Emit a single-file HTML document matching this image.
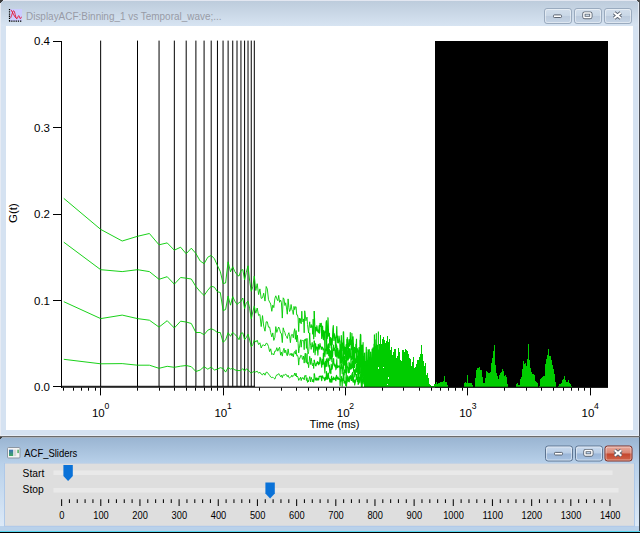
<!DOCTYPE html>
<html lang="en"><head><meta charset="utf-8"><title>DisplayACF</title>
<style>
html,body{margin:0;padding:0;background:#fff;overflow:hidden}
body{width:640px;height:533px;position:relative;font-family:"Liberation Sans",Arial,sans-serif}
svg text{white-space:pre}
</style></head><body>
<svg width="640" height="533" viewBox="0 0 640 533" style="position:absolute;left:0;top:0" font-family="'Liberation Sans', Arial, sans-serif">
<defs>
<linearGradient id="gi" x1="0" y1="0" x2="0" y2="1"><stop offset="0" stop-color="#bccbdb"/><stop offset="1" stop-color="#d7e4f2"/></linearGradient>
<linearGradient id="ga" x1="0" y1="0" x2="0" y2="1"><stop offset="0" stop-color="#99b4d1"/><stop offset="1" stop-color="#b9d1ea"/></linearGradient>
<linearGradient id="gb" x1="0" y1="0" x2="0" y2="1"><stop offset="0" stop-color="#d3dfec"/><stop offset="0.48" stop-color="#c9d7e6"/><stop offset="0.52" stop-color="#bccbdd"/><stop offset="1" stop-color="#c6d5e6"/></linearGradient>
<linearGradient id="gb2" x1="0" y1="0" x2="0" y2="1"><stop offset="0" stop-color="#cbdbee"/><stop offset="0.48" stop-color="#b8cde6"/><stop offset="0.52" stop-color="#9ab5d7"/><stop offset="1" stop-color="#a9c4e3"/></linearGradient>
<linearGradient id="gr" x1="0" y1="0" x2="0" y2="1"><stop offset="0" stop-color="#e8ab9f"/><stop offset="0.48" stop-color="#d98572"/><stop offset="0.52" stop-color="#c4452d"/><stop offset="1" stop-color="#d2674d"/></linearGradient>
<linearGradient id="gs" x1="0" y1="0" x2="0" y2="1"><stop offset="0" stop-color="#b9d1ea"/><stop offset="1" stop-color="#dce9f7"/></linearGradient>
<linearGradient id="gicon" x1="0" y1="0" x2="0" y2="1"><stop offset="0" stop-color="#3a6fb5"/><stop offset="1" stop-color="#3fa860"/></linearGradient>
<clipPath id="cp"><rect x="61" y="41" width="548" height="346"/></clipPath>
</defs>
<rect x="0" y="0" width="640" height="437" fill="#d5e2f1"/>
<rect x="0" y="0" width="640" height="26" fill="url(#gi)"/>
<rect x="0" y="0" width="640" height="1" fill="#e3e7f1"/>
<rect x="0" y="0" width="1" height="437" fill="#e6ebf4"/>
<rect x="638" y="1" width="1" height="435" fill="#e6ecf5"/>
<rect x="639" y="0" width="1" height="437" fill="#4c5058"/>
<path d="M640,0h-3v1h1v1h1v1h1z" fill="#4a4a4a"/>
<rect x="1" y="435" width="638" height="1" fill="#e8eef6"/>
<path d="M0,0h3v1h-1v1h-1v1h-1z" fill="#3c3c3c"/>
<rect x="6" y="26" width="627" height="404" fill="#ffffff"/>
<rect x="0" y="436" width="640" height="1" fill="#6c6c6c"/>
<rect x="10" y="9" width="12" height="12" fill="#ccccff"/>
<path d="M9.5,9v12.5M9,21.2h12.5" stroke="#000" stroke-width="1.2" stroke-dasharray="1.3,0.9" fill="none"/>
<path d="M11,9.8 C12.8,12.5 14.5,17.5 16.8,18.6 M10.4,18 C11.6,17 12.6,10.7 13.6,10.7 C14.9,10.7 15.5,18.7 16.9,18.7 C17.8,18.7 18,15.6 18.7,15.6 C19.4,15.6 19.6,18.7 20.3,18.7 C20.9,18.7 21,16.8 21.7,16.8" stroke="#e6001e" stroke-width="0.8" fill="none"/>
<text x="26" y="20.3" font-size="11.3" fill="#989ba6" textLength="195.5" lengthAdjust="spacingAndGlyphs">DisplayACF:Binning_1 vs Temporal_wave;...</text>
<rect x="544.5" y="8.5" width="27" height="15" rx="2.5" fill="url(#gb)" stroke="#9aabbf" stroke-width="1"/>
<rect x="545.5" y="9.5" width="25" height="13" rx="1.8" fill="none" stroke="#ffffff" stroke-opacity="0.45" stroke-width="1"/>
<rect x="574.5" y="8.5" width="27" height="15" rx="2.5" fill="url(#gb)" stroke="#9aabbf" stroke-width="1"/>
<rect x="575.5" y="9.5" width="25" height="13" rx="1.8" fill="none" stroke="#ffffff" stroke-opacity="0.45" stroke-width="1"/>
<rect x="604.5" y="8.5" width="27" height="15" rx="2.5" fill="url(#gb)" stroke="#9aabbf" stroke-width="1"/>
<rect x="605.5" y="9.5" width="25" height="13" rx="1.8" fill="none" stroke="#ffffff" stroke-opacity="0.45" stroke-width="1"/>
<rect x="553.5" y="14.9" width="8" height="2.6" rx="0.8" fill="#fff" stroke="#5b6471" stroke-width="1"/>
<rect x="583.9" y="13.0" width="7" height="4.6" rx="0.8" fill="none" stroke="#5b6471" stroke-width="3.2"/>
<rect x="583.9" y="13.0" width="7" height="4.6" rx="0.8" fill="none" stroke="#fff" stroke-width="1.5"/>
<path d="M614.2,12.8l6.6,5.4m0,-5.4l-6.6,5.4" stroke="#5b6471" stroke-width="3.8" fill="none"/>
<path d="M614.2,12.8l6.6,5.4m0,-5.4l-6.6,5.4" stroke="#fff" stroke-width="2.0" fill="none"/>
<rect x="435" y="41" width="173" height="346.6" fill="#000"/>
<path d="M100.65,40.6V386.5M137.50,40.6V386.5M159.05,40.6V386.5M174.34,40.6V386.5M186.20,40.6V386.5M195.90,40.6V386.5M204.09,40.6V386.5M211.19,40.6V386.5M217.45,40.6V386.5M223.05,40.6V386.5M228.12,40.6V386.5M232.74,40.6V386.5M237.00,40.6V386.5M240.94,40.6V386.5M244.60,40.6V386.5M248.03,40.6V386.5M251.26,40.6V386.5M254.30,40.6V386.5" stroke="#000" stroke-width="1" fill="none"/>
<g clip-path="url(#cp)" fill="none" stroke="#00cc00" stroke-width="0.9" stroke-linejoin="round">
<path d="M63.8,198.4 L100.7,229.4 L122.2,241.0 L137.5,236.3 L149.4,233.5 L159.0,244.8 L167.2,242.9 L174.3,250.2 L180.6,247.2 L186.2,253.8 L191.3,248.2 L195.9,253.5 L200.2,261.0 L204.1,263.7 L207.8,257.2 L211.2,255.4 L214.4,258.7 L217.4,265.5 L220.3,271.5 L223.1,283.5 L225.6,283.0 L228.1,261.8 L230.5,271.9 L232.7,266.7 L234.9,271.7 L237.0,274.7 L239.0,276.1 L240.9,270.4 L242.8,269.6 L244.6,280.0 L246.3,272.4 L248.0,265.8 L249.7,281.2 L251.3,291.3 L252.8,286.9 L254.3,276.0 L255.8,290.5 L257.2,283.7 L258.6,294.6 L259.9,288.9 L261.2,298.4 L262.5,297.8 L263.7,293.2 L265.0,301.1 L266.2,286.5 L267.3,288.9 L268.5,299.7 L269.6,302.0 L270.7,304.0 L271.8,311.3 L272.8,305.1 L273.8,307.6 L274.9,298.3 L275.8,295.8 L276.8,298.9 L277.8,300.7 L278.7,295.4 L279.6,302.3 L280.6,300.1 L281.4,302.3 L282.3,318.1 L283.2,297.8 L284.0,299.0 L284.9,305.5 L285.7,302.8 L286.5,307.9 L287.3,314.2 L288.1,298.9 L288.9,307.6 L289.6,311.5 L290.4,309.8 L291.1,304.5 L291.9,309.6 L292.6,311.2 L293.3,314.5 L294.0,306.4 L294.7,309.7 L295.4,306.8 L296.1,306.8 L296.7,314.9 L297.4,314.9 L298.1,318.0 L298.7,331.6 L299.3,318.0 L300.0,322.9 L300.6,318.6 L301.2,323.8 L301.8,311.2 L302.4,320.7 L303.0,321.9 L303.6,318.9 L304.2,332.8 L304.7,310.8 L305.3,314.9 L305.9,320.8 L306.4,319.4 L307.0,317.1 L307.5,324.6 L308.1,329.2 L308.6,333.1 L309.1,327.0 L309.7,321.8 L310.2,327.4 L310.7,327.6 L311.2,324.5 L311.7,327.6 L312.2,325.6 L312.7,334.3 L313.2,319.1 L313.7,339.2 L314.2,311.1"/>
<path d="M63.8,242.2 L100.7,269.7 L122.2,271.6 L137.5,269.7 L149.4,271.6 L159.0,279.3 L167.2,276.7 L174.3,284.2 L180.6,277.5 L186.2,278.2 L191.3,279.0 L195.9,286.5 L200.2,291.7 L204.1,295.5 L207.8,290.2 L211.2,286.2 L214.4,287.2 L217.4,291.7 L220.3,292.5 L223.1,310.5 L225.6,309.6 L228.1,296.1 L230.5,305.2 L232.7,296.6 L234.9,301.2 L237.0,304.5 L239.0,302.7 L240.9,301.5 L242.8,298.0 L244.6,308.7 L246.3,302.8 L248.0,301.2 L249.7,308.8 L251.3,318.9 L252.8,311.8 L254.3,305.9 L255.8,313.2 L257.2,308.0 L258.6,315.5 L259.9,314.5 L261.2,326.6 L262.5,315.6 L263.7,326.2 L265.0,331.2 L266.2,321.8 L267.3,321.8 L268.5,327.2 L269.6,327.0 L270.7,332.6 L271.8,336.9 L272.8,332.9 L273.8,340.4 L274.9,337.3 L275.8,326.6 L276.8,332.4 L277.8,329.2 L278.7,327.0 L279.6,329.2 L280.6,333.1 L281.4,333.4 L282.3,342.6 L283.2,327.8 L284.0,330.7 L284.9,332.5 L285.7,335.6 L286.5,336.6 L287.3,338.5 L288.1,334.5 L288.9,332.7 L289.6,336.3 L290.4,342.7 L291.1,336.0 L291.9,334.2 L292.6,334.7 L293.3,337.8 L294.0,331.9 L294.7,328.7 L295.4,339.3 L296.1,330.5 L296.7,341.9 L297.4,335.2 L298.1,343.4 L298.7,352.9 L299.3,348.5 L300.0,343.1 L300.6,339.7 L301.2,347.2 L301.8,340.1 L302.4,340.5 L303.0,340.2 L303.6,340.5 L304.2,349.7 L304.7,339.4 L305.3,340.6 L305.9,338.7 L306.4,348.4 L307.0,338.4 L307.5,350.4 L308.1,353.9 L308.6,351.6 L309.1,346.8 L309.7,332.8 L310.2,342.9 L310.7,345.8 L311.2,349.4 L311.7,345.1 L312.2,342.4 L312.7,347.1 L313.2,344.6 L313.7,352.6 L314.2,340.7"/>
<path d="M63.8,301.7 L100.7,318.6 L122.2,315.1 L137.5,318.6 L149.4,320.2 L159.0,327.1 L167.2,320.7 L174.3,328.0 L180.6,321.2 L186.2,322.0 L191.3,323.5 L195.9,332.5 L200.2,332.5 L204.1,334.7 L207.8,330.2 L211.2,328.7 L214.4,330.2 L217.4,332.5 L220.3,332.5 L223.1,342.2 L225.6,340.1 L228.1,332.7 L230.5,336.3 L232.7,332.2 L234.9,334.6 L237.0,336.5 L239.0,339.7 L240.9,333.2 L242.8,332.9 L244.6,339.7 L246.3,337.5 L248.0,334.2 L249.7,340.0 L251.3,346.9 L252.8,344.7 L254.3,339.9 L255.8,342.1 L257.2,340.2 L258.6,344.6 L259.9,342.8 L261.2,348.0 L262.5,345.0 L263.7,345.0 L265.0,345.8 L266.2,343.2 L267.3,343.6 L268.5,346.6 L269.6,351.6 L270.7,348.8 L271.8,354.7 L272.8,353.6 L273.8,354.9 L274.9,351.0 L275.8,351.1 L276.8,347.7 L277.8,351.2 L278.7,348.8 L279.6,347.2 L280.6,355.2 L281.4,352.1 L282.3,356.1 L283.2,350.8 L284.0,348.3 L284.9,352.9 L285.7,350.1 L286.5,354.2 L287.3,355.8 L288.1,348.9 L288.9,354.1 L289.6,355.2 L290.4,354.9 L291.1,353.1 L291.9,355.9 L292.6,353.7 L293.3,356.9 L294.0,352.7 L294.7,351.4 L295.4,354.1 L296.1,349.8 L296.7,355.7 L297.4,355.2 L298.1,357.1 L298.7,365.1 L299.3,358.1 L300.0,358.4 L300.6,355.4 L301.2,355.9 L301.8,355.5 L302.4,359.2 L303.0,359.4 L303.6,356.0 L304.2,363.1 L304.7,356.7 L305.3,353.1 L305.9,362.5 L306.4,362.8 L307.0,353.6 L307.5,364.1 L308.1,362.3 L308.6,367.7 L309.1,363.2 L309.7,356.3 L310.2,359.9 L310.7,364.5 L311.2,358.2 L311.7,361.4 L312.2,365.0 L312.7,365.9 L313.2,363.1 L313.7,368.5 L314.2,359.8"/>
<path d="M63.8,359.3 L100.7,363.8 L122.2,363.6 L137.5,365.2 L149.4,365.2 L159.0,368.3 L167.2,366.3 L174.3,367.3 L180.6,366.2 L186.2,365.5 L191.3,366.7 L195.9,371.5 L200.2,370.0 L204.1,366.7 L207.8,369.2 L211.2,367.0 L214.4,370.0 L217.4,369.2 L220.3,367.7 L223.1,368.5 L225.6,372.1 L228.1,367.4 L230.5,369.1 L232.7,368.3 L234.9,369.9 L237.0,370.4 L239.0,370.6 L240.9,370.5 L242.8,368.6 L244.6,371.2 L246.3,368.9 L248.0,369.8 L249.7,371.7 L251.3,373.4 L252.8,371.8 L254.3,371.7 L255.8,372.0 L257.2,371.2 L258.6,373.2 L259.9,372.2 L261.2,374.1 L262.5,374.9 L263.7,373.0 L265.0,375.2 L266.2,372.2 L267.3,372.3 L268.5,374.0 L269.6,375.3 L270.7,377.0 L271.8,377.6 L272.8,377.2 L273.8,378.2 L274.9,379.1 L275.8,376.4 L276.8,374.8 L277.8,374.8 L278.7,373.6 L279.6,375.1 L280.6,376.7 L281.4,375.2 L282.3,377.7 L283.2,374.8 L284.0,375.4 L284.9,375.0 L285.7,374.1 L286.5,374.7 L287.3,376.6 L288.1,375.3 L288.9,377.5 L289.6,377.8 L290.4,377.2 L291.1,377.0 L291.9,375.1 L292.6,376.7 L293.3,376.0 L294.0,375.4 L294.7,373.0 L295.4,376.0 L296.1,373.2 L296.7,377.0 L297.4,376.1 L298.1,377.8 L298.7,380.4 L299.3,378.9 L300.0,378.9 L300.6,377.1 L301.2,380.6 L301.8,378.2 L302.4,377.5 L303.0,378.8 L303.6,377.8 L304.2,379.9 L304.7,375.7 L305.3,376.4 L305.9,375.2 L306.4,380.5 L307.0,377.7 L307.5,382.4 L308.1,380.2 L308.6,381.8 L309.1,379.2 L309.7,376.6 L310.2,378.8 L310.7,382.0 L311.2,377.3 L311.7,379.1 L312.2,379.5 L312.7,382.0 L313.2,379.1 L313.7,382.3 L314.2,373.5"/>
<path d="M314.2,311.1 L314.6,320.8 L315.1,336.4 L315.6,327.3 L316.0,331.0 L316.5,330.1 L316.9,325.7 L317.4,330.3 L317.9,331.8 L318.3,330.0 L318.7,332.6 L319.2,325.6 L319.6,333.1 L320.0,323.4 L320.5,326.5 L320.9,325.1 L321.3,323.3 L321.7,338.4 L322.1,326.1 L322.6,326.2 L323.0,336.7 L323.4,339.7 L323.8,330.5 L324.2,332.4 L324.6,336.7 L324.9,353.3 L325.3,331.2 L325.7,332.7 L326.1,322.4 L326.5,320.7 L326.9,334.9 L327.2,338.7 L327.6,334.9 L328.0,317.7 L328.4,329.3 L328.7,336.1 L329.1,335.3 L329.4,333.3 L329.8,347.9 L330.2,338.9 L330.5,337.6 L330.9,345.0 L331.2,338.2 L331.6,345.6 L331.9,340.5 L332.2,344.6 L332.6,335.2 L332.9,328.8 L333.3,325.6 L333.6,334.9 L333.9,340.5 L334.2,333.6 L334.6,335.3 L334.9,337.3 L335.2,338.2 L335.5,347.4 L335.9,346.8 L336.2,336.8 L336.5,333.6 L336.8,326.5 L337.1,337.5 L337.4,335.9 L337.7,342.6 L338.0,341.8 L338.4,342.9 L338.7,341.3 L339.0,336.0 L339.3,338.3 L339.6,341.3 L339.8,340.7 L340.1,355.5 L340.4,346.4 L340.7,344.5 L341.0,360.5 L341.3,335.5 L341.6,344.3 L341.9,347.2 L342.2,350.6 L342.4,343.2 L342.7,346.5 L343.0,347.8 L343.3,331.7 L343.6,331.7 L343.8,339.0 L344.1,346.1 L344.4,347.7 L344.6,354.3 L344.9,347.2 L345.2,353.1 L345.5,353.2 L345.7,358.5 L346.0,347.3 L346.2,344.6 L346.5,365.4 L346.8,339.4 L347.0,347.9 L347.3,337.5 L347.5,340.3 L347.8,345.0 L348.0,353.3 L348.3,358.0 L348.5,346.5 L348.8,345.0 L349.0,339.5 L349.3,343.8 L349.5,346.2 L349.8,342.3 L350.0,344.5 L350.3,332.5 L350.5,343.1 L350.8,340.0 L351.0,342.4 L351.2,347.3 L351.5,349.5 L351.7,348.5 L351.9,333.4 L352.2,343.8 L352.4,350.6 L352.6,349.2 L352.9,351.6 L353.1,336.8 L353.3,342.6 L353.6,357.0 L353.8,352.0 L354.0,356.4 L354.2,352.9 L354.5,347.4 L354.7,360.3 L354.9,348.6 L355.1,351.0 L355.4,350.0 L355.6,352.8 L355.8,344.3 L356.0,349.7 L356.2,345.3 L356.5,339.2 L356.7,351.4 L356.9,350.2 L357.1,351.6 L357.3,349.6 L357.5,348.7 L357.7,350.6 L357.9,362.8 L358.2,374.8 L358.4,359.5 L358.6,350.5 L358.8,363.3 L359.0,347.5 L359.2,365.5 L359.4,349.4 L359.6,364.4 L359.8,360.4 L360.0,340.2 L360.2,341.6 L360.4,334.3 L360.6,352.2 L360.8,334.8 L361.0,356.7 L361.2,367.1 L361.4,365.7 L361.6,364.8 L361.8,345.9 L362.0,345.1 L362.2,375.4 L362.4,371.6 L362.6,352.5 L362.8,356.3 L363.0,359.3 L363.1,342.5 L363.3,360.7 L363.5,356.8 L363.7,356.8 L363.9,371.5 L364.1,358.7 L364.3,363.3 L364.5,353.0 L364.6,366.9 L364.8,366.2 L365.0,390.8 L365.2,374.8 L365.4,392.0 L365.6,370.1 L365.7,371.1 L365.9,364.3 L366.1,358.1 L366.3,347.3 L366.5,366.1 L366.6,352.1 L366.8,359.9 L367.0,369.9 L367.2,374.2 L367.4,362.2 L367.5,372.8 L367.7,360.8 L367.9,369.2 L368.1,349.7 L368.2,357.9 L368.4,359.7 L368.6,377.9 L368.7,364.5 L368.9,351.1 L369.1,357.7 L369.3,349.6 L369.4,365.0 L369.6,361.8 L369.8,358.1 L369.9,378.2 L370.1,357.2 L370.3,384.5 L370.4,378.0 L370.6,352.1 L370.8,372.0 L370.9,358.2 L371.1,378.4 L371.3,366.5 L371.4,363.0 L371.6,360.2 L371.7,368.3 L371.9,355.9 L372.1,349.1 L372.2,351.9 L372.4,356.7 L372.6,365.3 L372.7,359.7 L372.9,379.4 L373.0,347.8 L373.2,365.4 L373.3,349.3 L373.5,364.2 L373.7,349.8 L373.8,360.4 L374.0,344.0 L374.1,359.3 L374.3,370.1 L374.4,334.9 L374.6,356.5 L374.7,356.3 L374.9,346.0 L375.0,350.2 L375.2,372.4 L375.3,356.7 L375.5,359.2 L375.7,353.2 L375.8,340.0 L376.0,339.3 L376.1,359.5 L376.3,333.6 L376.4,356.0 L376.5,362.8 L376.7,355.3 L376.8,372.3 L377.0,345.1 L377.1,389.6 L377.3,345.2 L377.4,361.2 L377.6,366.6 L377.7,361.4 L377.9,372.4 L378.0,368.6 L378.2,358.1 L378.3,349.5 L378.4,331.4" stroke-width="1.15"/>
<path d="M314.2,340.7 L314.6,343.0 L315.1,354.7 L315.6,343.7 L316.0,350.3 L316.5,347.0 L316.9,347.3 L317.4,347.4 L317.9,355.1 L318.3,344.4 L318.7,346.2 L319.2,349.2 L319.6,346.5 L320.0,343.5 L320.5,346.6 L320.9,346.6 L321.3,349.4 L321.7,348.1 L322.1,347.1 L322.6,347.2 L323.0,349.8 L323.4,349.7 L323.8,348.8 L324.2,352.6 L324.6,354.9 L324.9,356.6 L325.3,350.6 L325.7,348.9 L326.1,350.7 L326.5,332.5 L326.9,354.0 L327.2,353.9 L327.6,353.2 L328.0,345.5 L328.4,343.8 L328.7,355.8 L329.1,349.8 L329.4,349.4 L329.8,360.4 L330.2,357.3 L330.5,350.9 L330.9,353.0 L331.2,358.8 L331.6,345.8 L331.9,361.7 L332.2,356.8 L332.6,356.3 L332.9,350.2 L333.3,347.4 L333.6,345.0 L333.9,350.4 L334.2,348.1 L334.6,348.1 L334.9,350.3 L335.2,354.3 L335.5,355.5 L335.9,356.5 L336.2,344.5 L336.5,351.1 L336.8,345.9 L337.1,358.2 L337.4,354.6 L337.7,348.4 L338.0,351.5 L338.4,355.9 L338.7,358.2 L339.0,357.3 L339.3,350.1 L339.6,357.1 L339.8,353.9 L340.1,366.3 L340.4,351.2 L340.7,358.3 L341.0,362.9 L341.3,350.0 L341.6,347.1 L341.9,358.1 L342.2,363.5 L342.4,361.0 L342.7,358.0 L343.0,360.2 L343.3,344.6 L343.6,348.1 L343.8,358.6 L344.1,359.2 L344.4,356.0 L344.6,365.1 L344.9,359.7 L345.2,363.1 L345.5,363.1 L345.7,372.6 L346.0,357.0 L346.2,356.5 L346.5,367.3 L346.8,357.0 L347.0,359.4 L347.3,351.5 L347.5,350.7 L347.8,355.6 L348.0,360.2 L348.3,359.5 L348.5,357.2 L348.8,354.7 L349.0,351.6 L349.3,358.2 L349.5,348.7 L349.8,348.6 L350.0,352.4 L350.3,348.9 L350.5,357.2 L350.8,356.4 L351.0,364.7 L351.2,356.3 L351.5,357.0 L351.7,359.5 L351.9,345.4 L352.2,357.1 L352.4,354.3 L352.6,351.8 L352.9,359.1 L353.1,343.4 L353.3,356.1 L353.6,368.1 L353.8,361.4 L354.0,357.9 L354.2,365.7 L354.5,357.8 L354.7,367.5 L354.9,360.7 L355.1,361.1 L355.4,363.5 L355.6,358.8 L355.8,362.5 L356.0,357.8 L356.2,358.3 L356.5,349.3 L356.7,362.6 L356.9,356.4 L357.1,365.0 L357.3,361.6 L357.5,363.5 L357.7,356.0 L357.9,365.3 L358.2,375.2 L358.4,362.1 L358.6,363.1 L358.8,360.1 L359.0,356.3 L359.2,367.8 L359.4,359.5 L359.6,367.4 L359.8,363.9 L360.0,354.7 L360.2,352.4 L360.4,351.9 L360.6,366.7 L360.8,354.4 L361.0,370.1 L361.2,372.8 L361.4,373.6 L361.6,373.5 L361.8,356.9 L362.0,358.2 L362.2,369.5 L362.4,375.0 L362.6,360.8 L362.8,358.3 L363.0,371.9 L363.1,359.7 L363.3,373.1 L363.5,360.0 L363.7,368.8 L363.9,376.2 L364.1,365.1 L364.3,365.8 L364.5,370.5 L364.6,369.4 L364.8,372.9 L365.0,387.3 L365.2,378.1 L365.4,392.0 L365.6,374.3 L365.7,375.0 L365.9,372.9 L366.1,370.0 L366.3,352.7 L366.5,367.8 L366.6,371.2 L366.8,380.5 L367.0,376.9 L367.2,374.8 L367.4,379.2 L367.5,375.1 L367.7,368.3 L367.9,382.7 L368.1,361.9 L368.2,372.9 L368.4,372.4 L368.6,368.5 L368.7,371.2 L368.9,366.0 L369.1,374.3 L369.3,369.2 L369.4,374.1 L369.6,374.2 L369.8,370.4 L369.9,376.7 L370.1,373.4 L370.3,379.2 L370.4,371.5 L370.6,354.4 L370.8,369.4 L370.9,360.4 L371.1,369.0 L371.3,368.3 L371.4,374.7 L371.6,368.4 L371.7,375.9 L371.9,363.4 L372.1,357.2 L372.2,362.5 L372.4,367.3 L372.6,363.7 L372.7,372.4 L372.9,379.5 L373.0,365.3 L373.2,374.6 L373.3,365.1 L373.5,373.9 L373.7,360.3 L373.8,374.7 L374.0,352.2 L374.1,361.9 L374.3,372.5 L374.4,350.7 L374.6,364.1 L374.7,372.4 L374.9,367.8 L375.0,362.2 L375.2,374.1 L375.3,362.1 L375.5,361.5 L375.7,355.3 L375.8,349.3 L376.0,349.6 L376.1,368.0 L376.3,349.4 L376.4,360.1 L376.5,366.3 L376.7,369.5 L376.8,365.1 L377.0,359.9 L377.1,364.3 L377.3,365.0 L377.4,365.3 L377.6,371.8 L377.7,368.8 L377.9,373.9 L378.0,370.1 L378.2,369.3 L378.3,359.2 L378.4,349.6" stroke-width="1.15"/>
<path d="M314.2,359.8 L314.6,361.9 L315.1,364.2 L315.6,365.7 L316.0,365.8 L316.5,363.2 L316.9,363.1 L317.4,361.6 L317.9,364.0 L318.3,362.2 L318.7,364.8 L319.2,362.9 L319.6,363.6 L320.0,357.3 L320.5,358.2 L320.9,358.8 L321.3,363.8 L321.7,367.1 L322.1,362.9 L322.6,359.3 L323.0,364.3 L323.4,353.1 L323.8,361.9 L324.2,363.7 L324.6,368.9 L324.9,372.9 L325.3,361.6 L325.7,366.7 L326.1,360.8 L326.5,358.9 L326.9,366.3 L327.2,362.1 L327.6,361.6 L328.0,358.0 L328.4,359.1 L328.7,365.8 L329.1,367.2 L329.4,365.4 L329.8,372.9 L330.2,369.4 L330.5,369.0 L330.9,373.6 L331.2,364.2 L331.6,368.2 L331.9,369.3 L332.2,368.7 L332.6,365.2 L332.9,361.0 L333.3,360.3 L333.6,358.5 L333.9,363.8 L334.2,365.2 L334.6,365.9 L334.9,364.1 L335.2,367.0 L335.5,365.3 L335.9,369.8 L336.2,367.5 L336.5,365.6 L336.8,359.5 L337.1,367.8 L337.4,367.6 L337.7,365.8 L338.0,366.6 L338.4,366.0 L338.7,367.1 L339.0,366.7 L339.3,366.9 L339.6,365.9 L339.8,365.8 L340.1,377.6 L340.4,367.4 L340.7,368.6 L341.0,368.2 L341.3,366.6 L341.6,363.9 L341.9,368.1 L342.2,373.6 L342.4,369.6 L342.7,367.3 L343.0,367.9 L343.3,359.4 L343.6,364.7 L343.8,369.7 L344.1,374.9 L344.4,371.0 L344.6,370.1 L344.9,372.5 L345.2,369.9 L345.5,371.6 L345.7,371.7 L346.0,372.2 L346.2,376.8 L346.5,371.9 L346.8,363.3 L347.0,366.1 L347.3,366.0 L347.5,367.4 L347.8,367.5 L348.0,371.1 L348.3,373.0 L348.5,369.5 L348.8,371.1 L349.0,362.0 L349.3,372.4 L349.5,367.6 L349.8,369.3 L350.0,363.4 L350.3,364.9 L350.5,369.1 L350.8,367.1 L351.0,364.8 L351.2,368.8 L351.5,368.5 L351.7,368.1 L351.9,362.8 L352.2,364.3 L352.4,361.3 L352.6,366.0 L352.9,367.9 L353.1,356.5 L353.3,364.4 L353.6,371.1 L353.8,369.9 L354.0,373.1 L354.2,371.7 L354.5,369.9 L354.7,376.9 L354.9,375.5 L355.1,370.1 L355.4,374.7 L355.6,370.1 L355.8,368.9 L356.0,368.3 L356.2,372.4 L356.5,364.1 L356.7,369.7 L356.9,366.2 L357.1,364.5 L357.3,371.8 L357.5,369.3 L357.7,366.7 L357.9,371.6 L358.2,379.1 L358.4,372.2 L358.6,378.1 L358.8,369.6 L359.0,370.6 L359.2,374.3 L359.4,366.5 L359.6,373.2 L359.8,373.6 L360.0,365.9 L360.2,363.9 L360.4,372.1 L360.6,372.9 L360.8,372.3 L361.0,373.3 L361.2,377.3 L361.4,377.5 L361.6,377.4 L361.8,371.4 L362.0,370.4 L362.2,379.9 L362.4,377.2 L362.6,367.2 L362.8,374.3 L363.0,369.9 L363.1,368.3 L363.3,376.0 L363.5,373.3 L363.7,377.8 L363.9,381.0 L364.1,371.8 L364.3,378.6 L364.5,372.8 L364.6,375.6 L364.8,375.1 L365.0,382.3 L365.2,379.6 L365.4,388.6 L365.6,373.2 L365.7,381.7 L365.9,374.3 L366.1,371.8 L366.3,362.2 L366.5,379.6 L366.6,373.0 L366.8,381.3 L367.0,380.5 L367.2,378.1 L367.4,381.4 L367.5,381.7 L367.7,375.2 L367.9,381.5 L368.1,371.3 L368.2,375.7 L368.4,374.1 L368.6,381.9 L368.7,374.4 L368.9,371.7 L369.1,379.2 L369.3,374.4 L369.4,371.5 L369.6,377.1 L369.8,371.6 L369.9,379.2 L370.1,380.5 L370.3,384.0 L370.4,378.8 L370.6,373.1 L370.8,374.9 L370.9,372.1 L371.1,374.1 L371.3,372.4 L371.4,376.2 L371.6,377.0 L371.7,376.9 L371.9,376.5 L372.1,366.6 L372.2,372.0 L372.4,371.5 L372.6,373.5 L372.7,369.9 L372.9,383.1 L373.0,369.5 L373.2,373.4 L373.3,372.9 L373.5,377.0 L373.7,369.8 L373.8,377.8 L374.0,364.0 L374.1,372.1 L374.3,375.1 L374.4,369.1 L374.6,371.4 L374.7,372.7 L374.9,370.9 L375.0,373.1 L375.2,377.4 L375.3,377.2 L375.5,372.9 L375.7,369.3 L375.8,362.8 L376.0,363.3 L376.1,377.1 L376.3,362.0 L376.4,370.8 L376.5,371.3 L376.7,374.0 L376.8,377.9 L377.0,367.8 L377.1,375.1 L377.3,368.3 L377.4,372.6 L377.6,377.4 L377.7,381.2 L377.9,375.5 L378.0,378.8 L378.2,375.6 L378.3,370.7 L378.4,365.6" stroke-width="1.15"/>
<path d="M314.2,373.5 L314.6,375.0 L315.1,380.2 L315.6,378.3 L316.0,378.4 L316.5,380.1 L316.9,377.9 L317.4,379.3 L317.9,380.1 L318.3,378.5 L318.7,379.8 L319.2,376.4 L319.6,376.4 L320.0,376.4 L320.5,376.2 L320.9,376.1 L321.3,378.2 L321.7,380.7 L322.1,375.9 L322.6,376.0 L323.0,377.7 L323.4,378.1 L323.8,378.3 L324.2,378.1 L324.6,380.4 L324.9,380.7 L325.3,377.4 L325.7,378.6 L326.1,379.4 L326.5,371.6 L326.9,377.2 L327.2,378.3 L327.6,379.2 L328.0,373.6 L328.4,373.1 L328.7,378.2 L329.1,378.0 L329.4,378.8 L329.8,381.9 L330.2,382.1 L330.5,379.6 L330.9,381.9 L331.2,378.8 L331.6,376.2 L331.9,382.1 L332.2,379.4 L332.6,379.6 L332.9,378.4 L333.3,379.6 L333.6,377.0 L333.9,378.7 L334.2,379.1 L334.6,379.1 L334.9,379.5 L335.2,377.9 L335.5,380.1 L335.9,380.7 L336.2,376.4 L336.5,375.4 L336.8,376.5 L337.1,378.7 L337.4,377.5 L337.7,379.2 L338.0,377.1 L338.4,379.3 L338.7,378.2 L339.0,378.7 L339.3,378.7 L339.6,379.7 L339.8,378.6 L340.1,385.6 L340.4,380.2 L340.7,381.3 L341.0,380.6 L341.3,376.3 L341.6,378.0 L341.9,381.0 L342.2,386.1 L342.4,379.1 L342.7,379.1 L343.0,380.6 L343.3,372.9 L343.6,375.9 L343.8,373.0 L344.1,383.0 L344.4,381.8 L344.6,381.8 L344.9,381.2 L345.2,383.3 L345.5,382.8 L345.7,385.5 L346.0,377.0 L346.2,379.6 L346.5,386.1 L346.8,379.0 L347.0,382.7 L347.3,375.7 L347.5,378.4 L347.8,377.8 L348.0,380.9 L348.3,381.0 L348.5,381.3 L348.8,378.5 L349.0,376.6 L349.3,381.8 L349.5,377.1 L349.8,376.6 L350.0,378.8 L350.3,375.8 L350.5,378.3 L350.8,375.7 L351.0,379.1 L351.2,380.5 L351.5,379.6 L351.7,380.5 L351.9,373.9 L352.2,377.8 L352.4,378.3 L352.6,372.3 L352.9,381.8 L353.1,374.3 L353.3,376.6 L353.6,379.2 L353.8,382.3 L354.0,382.0 L354.2,382.0 L354.5,380.0 L354.7,385.0 L354.9,382.9 L355.1,383.2 L355.4,381.9 L355.6,379.9 L355.8,379.5 L356.0,379.6 L356.2,379.4 L356.5,374.4 L356.7,379.1 L356.9,378.2 L357.1,376.0 L357.3,381.5 L357.5,377.3 L357.7,380.2 L357.9,379.9 L358.2,384.4 L358.4,379.5 L358.6,382.3 L358.8,383.5 L359.0,377.2 L359.2,381.7 L359.4,382.3 L359.6,382.2 L359.8,379.0 L360.0,375.3 L360.2,376.1 L360.4,374.3 L360.6,379.6 L360.8,378.3 L361.0,383.1 L361.2,382.1 L361.4,386.6 L361.6,383.0 L361.8,377.5 L362.0,376.5 L362.2,386.4 L362.4,382.5 L362.6,380.1 L362.8,379.7 L363.0,381.2 L363.1,379.7 L363.3,381.4 L363.5,377.3 L363.7,382.8 L363.9,383.8 L364.1,378.0 L364.3,380.7 L364.5,381.4 L364.6,382.9 L364.8,382.2 L365.0,386.2 L365.2,388.4 L365.4,392.0 L365.6,383.8 L365.7,385.0 L365.9,383.6 L366.1,382.6 L366.3,375.8 L366.5,382.8 L366.6,378.9 L366.8,378.2 L367.0,381.8 L367.2,385.4 L367.4,383.5 L367.5,384.3 L367.7,382.6 L367.9,386.3 L368.1,377.0 L368.2,381.4 L368.4,381.2 L368.6,385.3 L368.7,384.4 L368.9,379.6 L369.1,382.2 L369.3,381.2 L369.4,379.9 L369.6,380.7 L369.8,379.5 L369.9,383.7 L370.1,387.4 L370.3,385.7 L370.4,385.2 L370.6,378.5 L370.8,381.7 L370.9,379.6 L371.1,382.5 L371.3,386.9 L371.4,382.5 L371.6,381.4 L371.7,384.0 L371.9,380.9 L372.1,374.8 L372.2,378.1 L372.4,376.5 L372.6,379.5 L372.7,375.0 L372.9,387.2 L373.0,378.4 L373.2,380.5 L373.3,378.5 L373.5,381.6 L373.7,377.5 L373.8,385.4 L374.0,376.6 L374.1,380.4 L374.3,381.5 L374.4,371.6 L374.6,380.9 L374.7,379.9 L374.9,379.6 L375.0,381.1 L375.2,382.3 L375.3,382.0 L375.5,381.1 L375.7,378.3 L375.8,373.6 L376.0,373.7 L376.1,384.1 L376.3,376.7 L376.4,376.8 L376.5,380.6 L376.7,380.8 L376.8,383.9 L377.0,380.2 L377.1,389.0 L377.3,377.2 L377.4,379.2 L377.6,381.0 L377.7,383.9 L377.9,382.8 L378.0,383.6 L378.2,382.2 L378.3,377.7 L378.4,372.8" stroke-width="1.15"/>
<path d="M364.5,371.3V387M365.5,361.4V387M366.5,366.1V387M367.5,366.0V387M368.5,363.0V387M369.5,363.2V387M370.5,368.9V387M371.5,362.7V387M372.5,370.4V387M373.5,368.7V387M374.5,367.9V387M375.5,363.2V387M376.5,346.2V387M377.5,351.8V387M378.5,349.9V387M379.5,344.4V387M380.5,335.0V387M381.5,343.5V387M382.5,338.5V387M383.5,337.0V387M384.5,339.7V387M385.5,343.2V387M386.5,340.6V387M387.5,335.5V387M388.5,341.8V387M389.5,339.0V387M390.5,350.1V387M391.5,347.2V387M392.5,354.7V387M393.5,352.0V387M394.5,349.3V387M395.5,348.6V387M396.5,357.5V387M397.5,356.4V387M398.5,348.1V387M399.5,351.6V387M400.5,359.5V387M401.5,360.9V387M402.5,350.3V387M403.5,349.7V387M404.5,352.2V387M405.5,349.2V387M406.5,349.8V387M407.5,350.7V387M408.5,353.7V387M409.5,358.0V387M410.5,359.0V387M411.5,365.9V387M412.5,362.1V387M413.5,357.0V387M414.5,367.7V387M415.5,367.4V387M416.5,364.4V387M417.5,360.2V387M418.5,360.4V387M419.5,356.7V387M420.5,353.9V387M421.5,344.6V387M422.5,354.0V387M423.5,360.6V387M424.5,365.8V387M425.5,362.5V387M426.5,374.5V387M427.5,372.6V387M428.5,377.8V387M429.5,384.2V387M430.5,384.9V387M431.5,386.2V387M432.5,386.2V387M433.5,386.2V387M434.5,384.0V387M435.5,383.7V387M436.5,382.2V387M437.5,383.7V387M438.5,383.2V387M439.5,382.5V387M440.5,381.5V387M441.5,381.8V387M442.5,381.5V387M443.5,380.6V387M444.5,375.7V387M445.5,381.5V387M446.5,382.0V387M447.5,385.2V387M464.5,382.9V387M465.5,381.8V387M466.5,383.3V387M467.5,375.0V387M468.5,383.4V387M469.5,382.8V387M470.5,382.5V387M471.5,383.4V387M472.5,385.3V387M475.5,377.8V387M476.5,370.0V387M477.5,367.5V387M478.5,368.2V387M479.5,367.3V387M480.5,369.9V387M481.5,369.8V387M482.5,376.6V387M483.5,383.4V387M484.5,383.3V387M485.5,378.2V387M486.5,371.2V387M487.5,372.1V387M488.5,372.9V387M489.5,373.0V387M490.5,371.5V387M491.5,363.3V387M492.5,358.2V387M493.5,351.0V387M494.5,345.0V387M495.5,365.4V387M496.5,372.9V387M497.5,376.3V387M498.5,378.8V387M499.5,374.7V387M500.5,373.1V387M501.5,372.0V387M502.5,368.8V387M503.5,370.7V387M504.5,375.7V387M505.5,375.0V387M506.5,376.6V387M507.5,384.3V387M516.5,384.3V387M517.5,383.1V387M518.5,385.3V387M519.5,385.3V387M520.5,379.0V387M521.5,377.1V387M522.5,368.9V387M523.5,361.2V387M524.5,363.7V387M525.5,363.0V387M526.5,366.0V387M527.5,359.0V387M528.5,343.5V387M529.5,359.9V387M530.5,367.5V387M531.5,371.6V387M532.5,374.4V387M533.5,374.0V387M534.5,374.5V387M535.5,381.2V387M536.5,381.7V387M537.5,383.2V387M539.5,386.2V387M540.5,378.6V387M541.5,378.0V387M542.5,377.1V387M543.5,376.1V387M544.5,376.0V387M545.5,364.0V387M546.5,359.0V387M547.5,355.0V387M548.5,349.0V387M549.5,356.2V387M550.5,355.7V387M551.5,359.9V387M552.5,365.0V387M553.5,368.9V387M554.5,373.8V387M555.5,382.0V387M558.5,386.2V387M559.5,383.8V387M560.5,383.8V387M561.5,383.1V387M562.5,380.1V387M563.5,379.1V387M564.5,375.7V387M565.5,379.5V387M566.5,381.9V387M567.5,381.9V387M568.5,380.3V387M569.5,382.8V387M570.5,383.6V387M571.5,386.0V387" stroke-width="1" shape-rendering="crispEdges"/>
</g>
<path d="M387.5,384.0v1.4M378.5,367.4v1.6M388.5,377.1v2.1M383.5,366.7v1.4" stroke="#fff" stroke-width="1" fill="none" shape-rendering="crispEdges"/>
<rect x="61" y="41" width="1" height="347" fill="#000"/>
<path d="M53,41.5H61M53,127.5H61M53,214.5H61M53,300.5H61M53,386.5H61M63.5,387.6V390.7M73.5,387.6V390.7M81.5,387.6V390.7M88.5,387.6V390.7M95.5,387.6V390.7M100.5,387.6V395.4M137.5,387.6V390.7M159.5,387.6V390.7M174.5,387.6V390.7M186.5,387.6V390.7M195.5,387.6V390.7M204.5,387.6V390.7M211.5,387.6V390.7M217.5,387.6V390.7M223.5,387.6V395.4M259.5,387.6V390.7M281.5,387.6V390.7M296.5,387.6V390.7M308.5,387.6V390.7M318.5,387.6V390.7M326.5,387.6V390.7M333.5,387.6V390.7M339.5,387.6V390.7M345.5,387.6V395.4M382.5,387.6V390.7M403.5,387.6V390.7M419.5,387.6V390.7M431.5,387.6V390.7M440.5,387.6V390.7M448.5,387.6V390.7M455.5,387.6V390.7M462.5,387.6V390.7M467.5,387.6V395.4M504.5,387.6V390.7M526.5,387.6V390.7M541.5,387.6V390.7M553.5,387.6V390.7M563.5,387.6V390.7M571.5,387.6V390.7M578.5,387.6V390.7M584.5,387.6V390.7M590.5,387.6V395.4" stroke="#000" stroke-width="1" fill="none"/>
<rect x="61" y="386.7" width="547" height="1" fill="#000"/>
<rect x="61" y="385.8" width="194" height="1" fill="#000"/>
<text x="50" y="45.1" font-size="11.5" text-anchor="end" fill="#000">0.4</text>
<text x="50" y="131.6" font-size="11.5" text-anchor="end" fill="#000">0.3</text>
<text x="50" y="218.1" font-size="11.5" text-anchor="end" fill="#000">0.2</text>
<text x="50" y="304.6" font-size="11.5" text-anchor="end" fill="#000">0.1</text>
<text x="50" y="390.6" font-size="11.5" text-anchor="end" fill="#000">0.0</text>
<text x="109.2" y="417" font-size="11.5" text-anchor="end" fill="#000">10<tspan dy="-8.1" dx="-0.3" font-size="8.6">0</tspan></text>
<text x="231.7" y="417" font-size="11.5" text-anchor="end" fill="#000">10<tspan dy="-8.1" dx="-0.3" font-size="8.6">1</tspan></text>
<text x="354.1" y="417" font-size="11.5" text-anchor="end" fill="#000">10<tspan dy="-8.1" dx="-0.3" font-size="8.6">2</tspan></text>
<text x="476.5" y="417" font-size="11.5" text-anchor="end" fill="#000">10<tspan dy="-8.1" dx="-0.3" font-size="8.6">3</tspan></text>
<text x="598.9" y="417" font-size="11.5" text-anchor="end" fill="#000">10<tspan dy="-8.1" dx="-0.3" font-size="8.6">4</tspan></text>
<text x="334.6" y="427.5" font-size="11.5" text-anchor="middle" fill="#000" textLength="50" lengthAdjust="spacingAndGlyphs">Time (ms)</text>
<text transform="translate(17.0,213) rotate(-90)" font-size="11.5" text-anchor="middle" fill="#000">G(t)</text>
<rect x="0" y="437" width="640" height="94" fill="#b9d1ea"/>
<rect x="0" y="437" width="640" height="27" fill="url(#ga)"/>
<rect x="0" y="437" width="640" height="1" fill="#a9b2bc"/>
<rect x="0" y="464" width="4" height="62" fill="url(#gs)"/>
<rect x="635" y="464" width="4" height="62" fill="url(#gs)"/>
<rect x="639" y="437" width="1" height="96" fill="#3c4854"/>
<path d="M0,437h2v1h-1v1h-1z" fill="#3c3c3c"/>
<rect x="4" y="463" width="631" height="63.7" fill="#aec8e8"/>
<rect x="5" y="463.5" width="629" height="62.3" fill="#dedede"/>
<rect x="0" y="531" width="640" height="1" fill="#56d6ee"/>
<rect x="0" y="532" width="640" height="1" fill="#000"/>
<rect x="7.5" y="447.5" width="12.5" height="10.5" rx="1" fill="#f4f4f4" stroke="#8c96a2" stroke-width="1"/>
<rect x="9" y="449.7" width="4.2" height="6.3" fill="url(#gicon)"/>
<rect x="14" y="449.7" width="2.2" height="6.3" fill="#d8d8d8"/>
<rect x="17.3" y="449.7" width="1.6" height="3.4" fill="#59b36a"/>
<text x="24.3" y="457.2" font-size="11.3" fill="#000" textLength="53" lengthAdjust="spacingAndGlyphs">ACF_Sliders</text>
<rect x="545.5" y="446.0" width="27" height="15" rx="2.5" fill="url(#gb2)" stroke="#5d7491" stroke-width="1"/>
<rect x="546.5" y="447.0" width="25" height="13" rx="1.8" fill="none" stroke="#ffffff" stroke-opacity="0.45" stroke-width="1"/>
<rect x="575.5" y="446.0" width="27" height="15" rx="2.5" fill="url(#gb2)" stroke="#5d7491" stroke-width="1"/>
<rect x="576.5" y="447.0" width="25" height="13" rx="1.8" fill="none" stroke="#ffffff" stroke-opacity="0.45" stroke-width="1"/>
<rect x="605.0" y="446.0" width="27" height="15" rx="2.5" fill="url(#gr)" stroke="#7a2a22" stroke-width="1"/>
<rect x="606.0" y="447.0" width="25" height="13" rx="1.8" fill="none" stroke="#ffffff" stroke-opacity="0.45" stroke-width="1"/>
<rect x="554.5" y="452.4" width="8" height="2.6" rx="0.8" fill="#fff" stroke="#5b6471" stroke-width="1"/>
<rect x="584.9" y="450.5" width="7" height="4.6" rx="0.8" fill="none" stroke="#5b6471" stroke-width="3.2"/>
<rect x="584.9" y="450.5" width="7" height="4.6" rx="0.8" fill="none" stroke="#fff" stroke-width="1.5"/>
<path d="M614.7,450.3l6.6,5.4m0,-5.4l-6.6,5.4" stroke="#5b6471" stroke-width="3.8" fill="none"/>
<path d="M614.7,450.3l6.6,5.4m0,-5.4l-6.6,5.4" stroke="#fff" stroke-width="2.0" fill="none"/>
<text x="22.6" y="476.6" font-size="11.4" fill="#000" textLength="21.7" lengthAdjust="spacingAndGlyphs">Start</text>
<text x="22.6" y="493.3" font-size="11.4" fill="#000" textLength="21.2" lengthAdjust="spacingAndGlyphs">Stop</text>
<rect x="53.5" y="470.5" width="559" height="4.5" fill="#e9e9e9"/>
<rect x="53.5" y="488" width="565" height="4.5" fill="#e9e9e9"/>
<path d="M63.4,465.0h9.4v11l-4.7,5l-4.7,-5z" fill="#0a72d8"/>
<path d="M265.4,482.5h9.4v11l-4.7,5l-4.7,-5z" fill="#0a72d8"/>
<path d="M61.60,499.3V505.9M69.43,499.3V503M77.27,499.3V503M85.10,499.3V503M92.94,499.3V503M100.77,499.3V505.9M108.60,499.3V503M116.44,499.3V503M124.27,499.3V503M132.11,499.3V503M139.94,499.3V505.9M147.77,499.3V503M155.61,499.3V503M163.44,499.3V503M171.28,499.3V503M179.11,499.3V505.9M186.94,499.3V503M194.78,499.3V503M202.61,499.3V503M210.45,499.3V503M218.28,499.3V505.9M226.11,499.3V503M233.95,499.3V503M241.78,499.3V503M249.62,499.3V503M257.45,499.3V505.9M265.28,499.3V503M273.12,499.3V503M280.95,499.3V503M288.79,499.3V503M296.62,499.3V505.9M304.45,499.3V503M312.29,499.3V503M320.12,499.3V503M327.96,499.3V503M335.79,499.3V505.9M343.62,499.3V503M351.46,499.3V503M359.29,499.3V503M367.13,499.3V503M374.96,499.3V505.9M382.79,499.3V503M390.63,499.3V503M398.46,499.3V503M406.30,499.3V503M414.13,499.3V505.9M421.96,499.3V503M429.80,499.3V503M437.63,499.3V503M445.47,499.3V503M453.30,499.3V505.9M461.13,499.3V503M468.97,499.3V503M476.80,499.3V503M484.64,499.3V503M492.47,499.3V505.9M500.30,499.3V503M508.14,499.3V503M515.97,499.3V503M523.81,499.3V503M531.64,499.3V505.9M539.47,499.3V503M547.31,499.3V503M555.14,499.3V503M562.98,499.3V503M570.81,499.3V505.9M578.64,499.3V503M586.48,499.3V503M594.31,499.3V503M602.15,499.3V503M609.98,499.3V505.9" stroke="#111" stroke-width="1.1" fill="none"/>
<text x="61.8" y="518.7" font-size="10.2" text-anchor="middle" fill="#000" textLength="5.2" lengthAdjust="spacingAndGlyphs">0</text>
<text x="101.0" y="518.7" font-size="10.2" text-anchor="middle" fill="#000" textLength="15.5" lengthAdjust="spacingAndGlyphs">100</text>
<text x="140.1" y="518.7" font-size="10.2" text-anchor="middle" fill="#000" textLength="15.5" lengthAdjust="spacingAndGlyphs">200</text>
<text x="179.3" y="518.7" font-size="10.2" text-anchor="middle" fill="#000" textLength="15.5" lengthAdjust="spacingAndGlyphs">300</text>
<text x="218.5" y="518.7" font-size="10.2" text-anchor="middle" fill="#000" textLength="15.5" lengthAdjust="spacingAndGlyphs">400</text>
<text x="257.7" y="518.7" font-size="10.2" text-anchor="middle" fill="#000" textLength="15.5" lengthAdjust="spacingAndGlyphs">500</text>
<text x="296.8" y="518.7" font-size="10.2" text-anchor="middle" fill="#000" textLength="15.5" lengthAdjust="spacingAndGlyphs">600</text>
<text x="336.0" y="518.7" font-size="10.2" text-anchor="middle" fill="#000" textLength="15.5" lengthAdjust="spacingAndGlyphs">700</text>
<text x="375.2" y="518.7" font-size="10.2" text-anchor="middle" fill="#000" textLength="15.5" lengthAdjust="spacingAndGlyphs">800</text>
<text x="414.3" y="518.7" font-size="10.2" text-anchor="middle" fill="#000" textLength="15.5" lengthAdjust="spacingAndGlyphs">900</text>
<text x="453.5" y="518.7" font-size="10.2" text-anchor="middle" fill="#000" textLength="20.6" lengthAdjust="spacingAndGlyphs">1000</text>
<text x="492.7" y="518.7" font-size="10.2" text-anchor="middle" fill="#000" textLength="20.6" lengthAdjust="spacingAndGlyphs">1100</text>
<text x="531.8" y="518.7" font-size="10.2" text-anchor="middle" fill="#000" textLength="20.6" lengthAdjust="spacingAndGlyphs">1200</text>
<text x="571.0" y="518.7" font-size="10.2" text-anchor="middle" fill="#000" textLength="20.6" lengthAdjust="spacingAndGlyphs">1300</text>
<text x="610.2" y="518.7" font-size="10.2" text-anchor="middle" fill="#000" textLength="20.6" lengthAdjust="spacingAndGlyphs">1400</text>
</svg>
</body></html>
